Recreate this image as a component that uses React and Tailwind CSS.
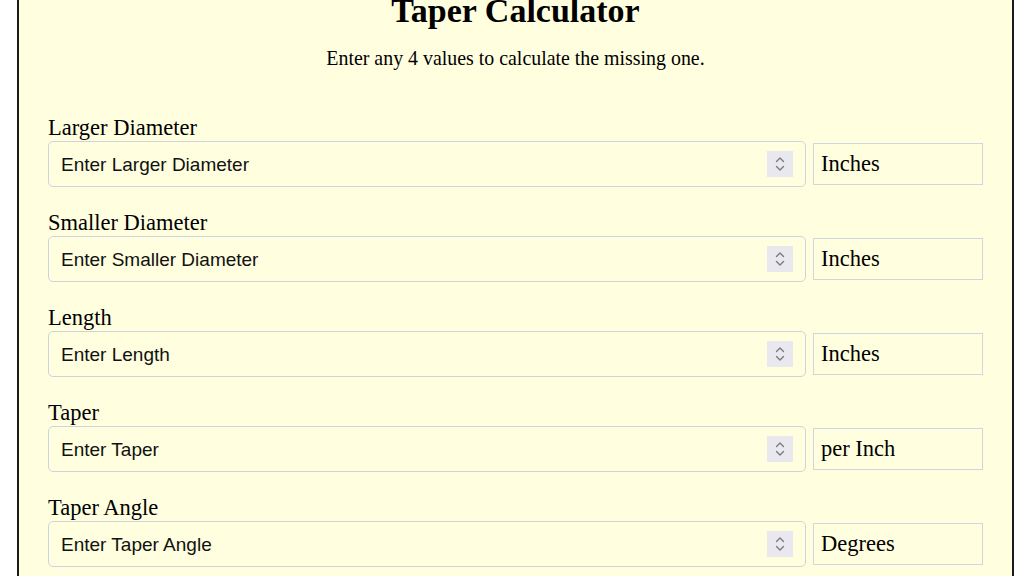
import React from "react";

const fields = [
  { label: "Larger Diameter", unit: "Inches" },
  { label: "Smaller Diameter", unit: "Inches" },
  { label: "Length", unit: "Inches" },
  { label: "Taper", unit: "per Inch" },
  { label: "Taper Angle", unit: "Degrees" },
];

function Spinner() {
  return (
    <div className="flex h-[26px] w-[26px] shrink-0 items-center justify-center bg-[#e8e8ee]">
      <svg width="12" height="18" viewBox="0 0 12 18" fill="none" stroke="#7a7a80" strokeWidth="1.4" strokeLinecap="round" strokeLinejoin="round">
        <path d="M2.5 6.5 L6 3 L9.5 6.5" />
        <path d="M2.5 11.5 L6 15 L9.5 11.5" />
      </svg>
    </div>
  );
}

export default function App() {
  return (
    <div className="min-h-screen overflow-hidden bg-white">
      <div
        className="ml-[17px] mt-[-20px] w-[997px] border-2 border-[#1a1a1a] bg-[#ffffe0] px-[29px] pb-10 pt-[10px] text-black"
        style={{ fontFamily: '"Liberation Serif", "Times New Roman", serif' }}
      >
        <h1 className="text-center text-[34px] font-bold leading-[38px]">Taper Calculator</h1>
        <p className="mt-[16px] text-center text-[19.9px] leading-[24px]">
          Enter any 4 values to calculate the missing one.
        </p>
        <div className="mt-[45px] flex flex-col gap-[23px]">
          {fields.map((f) => (
            <div key={f.label} className="flex flex-col">
              <label className="text-[22.5px] leading-[26px]">{f.label}</label>
              <div className="flex items-center gap-[7px]">
                <div className="flex h-[46px] flex-1 items-center rounded-[5px] border border-[#cdd3dc] pl-[12px] pr-[12px]">
                  <input
                    type="text"
                    placeholder={`Enter ${f.label}`}
                    className="min-w-0 flex-1 bg-transparent pt-[3px] text-[19px] text-black outline-none placeholder:text-[#111]"
                    style={{ fontFamily: '"Liberation Sans", Arial, sans-serif' }}
                  />
                  <Spinner />
                </div>
                <div className="flex h-[42px] w-[170px] shrink-0 items-center border border-[#cfd6e0] px-[7px] text-[22.5px]">
                  {f.unit}
                </div>
              </div>
            </div>
          ))}
        </div>
      </div>
    </div>
  );
}
